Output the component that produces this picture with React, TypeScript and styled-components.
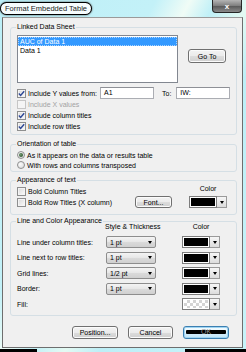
import React from "react";
import styled, { createGlobalStyle } from "styled-components";

const Global = createGlobalStyle`
  html, body { margin: 0; padding: 0; }
  body { background: #bff0f7; font-family: "Liberation Sans", Arial, sans-serif; }
  * { box-sizing: border-box; }
`;

const Screen = styled.div`
  width: 246px;
  height: 352px;
  overflow: hidden;
  display: flex;
  flex-direction: column;
  background: linear-gradient(118deg, #bdeff7 0%, #c3f1f8 36%, #f0fcf6 44%, #c0f0f7 50%, #e4faf3 58%, #bdeff7 66%, #c8f3f9 100%);
  font-family: "Liberation Sans", Arial, sans-serif;
  font-size: 7px;
  color: #000;
`;

const TitleBar = styled.div`
  height: 17px;
  flex: none;
  display: flex;
  justify-content: space-between;
  align-items: flex-start;
`;

const TitleText = styled.div`
  margin: 3px 0 0 1px;
  height: 11px;
  padding: 0 4px;
  line-height: 11px;
  font-size: 7.5px;
  color: #1c1c1c;
  background: #f6fcfd;
  border-radius: 6px;
  box-shadow: 0 0 0 1px #000, 0 0 2px 1px #333;
  white-space: nowrap;
`;

const CloseButton = styled.div`
  width: 30px;
  height: 13px;
  margin-right: 4px;
  border: 1px solid #262626;
  border-top: none;
  border-radius: 0 0 4px 4px;
  background: linear-gradient(#b4b4b4, #7c7c7c 50%, #5a5a5a 52%, #8a8a8a);
  color: #fff;
  font-size: 8px;
  font-weight: bold;
  display: flex;
  align-items: center;
  justify-content: center;
`;

const Dialog = styled.div`
  margin-left: 2px;
  width: 241px;
  height: 331px;
  flex: none;
  border: 1px solid #6e6e6e;
  border-top-color: #9a9a9a;
  background: #f0f0f0;
  padding: 5px 5px 0 7px;
  display: flex;
  flex-direction: column;
`;

const Group = styled.fieldset<{ $mt: number; $pt: number; $pb: number }>`
  margin: ${p => p.$mt}px 0 0 0;
  padding: ${p => p.$pt}px 0 ${p => p.$pb}px 6px;
  width: 227px;
  min-inline-size: 0;
  border: 1px solid #d5dfe5;
  border-radius: 3px;
`;

const Legend = styled.legend`
  padding: 0 1px;
  margin-left: -1px;
  font-size: 7px;
  line-height: 8px;
  white-space: nowrap;
`;

const ListRow = styled.div`
  display: flex;
  align-items: flex-start;
`;

const ListBox = styled.div`
  width: 161px;
  height: 48px;
  border: 1px solid #828790;
  background: #fff;
  padding-top: 1px;
`;

const ListItem = styled.div<{ $selected?: boolean }>`
  height: 9px;
  line-height: 9px;
  padding-left: 2px;
  color: ${p => (p.$selected ? "#fff" : "#000")};
  background: ${p => (p.$selected ? "#3399ff" : "transparent")};
  outline: ${p => (p.$selected ? "1px dotted #a8d3ff" : "none")};
  outline-offset: -1px;
`;

const PushButton = styled.div<{ $w: number; $ml?: number; $mt?: number; $h?: number }>`
  width: ${p => p.$w}px;
  height: ${p => p.$h ?? 13}px;
  margin-left: ${p => p.$ml ?? 0}px;
  margin-top: ${p => p.$mt ?? 0}px;
  border: 1px solid #707070;
  border-radius: 3px;
  background: linear-gradient(#f3f3f3 0%, #ebebeb 50%, #dddddd 50%, #cfcfcf 100%);
  box-shadow: inset 0 0 0 1px #fbfbfb;
  display: flex;
  align-items: center;
  justify-content: center;
  font-size: 7px;
  flex: none;
`;

const OkButton = styled(PushButton)`
  border-color: #3c7fb1;
  background: linear-gradient(#f4fbfe 0%, #e6f5fd 50%, #d3eefc 50%, #c3e5f7 100%);
  box-shadow: inset 0 0 0 1px #9fd5f3;
`;

const OkLabel = styled.span`
  width: 40px;
  height: 4px;
  margin-top: -1px;
  background: #000;
  border-radius: 1px;
  color: #9a9a9a;
  font-size: 7px;
  line-height: 4px;
  text-align: center;
  overflow: visible;
`;

const Rows = styled.div`
  margin-top: 4px;
  display: flex;
  flex-direction: column;
`;

const Row = styled.div<{ $h: number }>`
  display: flex;
  align-items: center;
  height: ${p => p.$h}px;
`;

const CheckItem = styled.div<{ $w?: number }>`
  display: flex;
  align-items: center;
  width: ${p => (p.$w ? `${p.$w}px` : "auto")};
  flex: none;
`;

const Box = styled.span<{ $disabled?: boolean }>`
  width: 9px;
  height: 9px;
  flex: none;
  border: 1px solid ${p => (p.$disabled ? "#c6c6c6" : "#8e8f8f")};
  background: ${p => (p.$disabled ? "#f5f5f5" : "linear-gradient(135deg, #d9d9d9, #fbfbfb)")};
  box-shadow: inset 0 0 0 1px ${p => (p.$disabled ? "#f5f5f5" : "#f4f4f4")};
  display: flex;
  align-items: center;
  justify-content: center;
`;

const RadioCircle = styled.span`
  width: 8px;
  height: 8px;
  flex: none;
  border: 1px solid #8e8f8f;
  border-radius: 50%;
  background: radial-gradient(circle at 35% 35%, #fbfbfb, #d6d6d6);
  display: flex;
  align-items: center;
  justify-content: center;
`;

const RadioDot = styled.span`
  width: 4px;
  height: 4px;
  border-radius: 50%;
  background: radial-gradient(circle at 40% 40%, #6f9a6f, #1d3f1d);
`;

const Label = styled.span<{ $disabled?: boolean }>`
  margin-left: 2px;
  font-size: 7px;
  white-space: nowrap;
  color: ${p => (p.$disabled ? "#a3a3a3" : "#000")};
`;

const TextField = styled.div<{ $w: number }>`
  width: ${p => p.$w}px;
  height: 12px;
  border: 1px solid #abadb3;
  border-top-color: #8e9096;
  background: #fff;
  padding-left: 3px;
  line-height: 10px;
  font-size: 7px;
  flex: none;
`;

const ToLabel = styled.span`
  margin: 0 5px 0 8px;
  font-size: 7px;
`;

const TextRow = styled.div`
  display: flex;
  align-items: flex-end;
  height: 23px;
`;

const TextChecks = styled.div`
  display: flex;
  flex-direction: column;
  width: 118px;
`;

const ColorColumn = styled.div`
  margin-left: 17px;
  display: flex;
  flex-direction: column;
  align-items: center;
  gap: 3px;
`;

const HeaderText = styled.span`
  font-size: 7px;
  line-height: 8px;
  white-space: nowrap;
`;

const LineGrid = styled.div`
  display: grid;
  grid-template-columns: 89px 76px 38px;
  grid-template-rows: 9.5px;
  grid-auto-rows: 12px;
  row-gap: 3.5px;
  align-items: center;
  margin-top: -2px;
`;

const GridHeader = styled.span<{ $center?: boolean }>`
  font-size: 7px;
  line-height: 7px;
  white-space: nowrap;
  justify-self: ${p => (p.$center ? "center" : "start")};
  margin-left: ${p => (p.$center ? 0 : -1)}px;
  align-self: start;
`;

const RowLabel = styled.span`
  font-size: 7px;
  white-space: nowrap;
`;

const Combo = styled.div`
  width: 50px;
  height: 12px;
  border: 1px solid #8d8d8d;
  border-radius: 2px;
  background: linear-gradient(#f4f4f4, #e6e6e6 50%, #dadada 52%, #d0d0d0);
  display: flex;
  align-items: center;
  justify-content: space-between;
  padding: 0 3px 0 3px;
  font-size: 7px;
`;

const Arrow = styled.span`
  width: 0;
  height: 0;
  border-left: 2.5px solid transparent;
  border-right: 2.5px solid transparent;
  border-top: 3px solid #000;
`;

const Swatch = styled.div`
  width: 38px;
  height: 12px;
  display: flex;
  flex: none;
`;

const SwatchColor = styled.div<{ $checker?: boolean }>`
  flex: 1;
  border: 1px solid #7d7d7d;
  box-shadow: inset 0 0 0 1px #fff;
  background-color: ${p => (p.$checker ? "#fff" : "#000")};
  background-image: ${p =>
    p.$checker ? "conic-gradient(#d4d4d4 25%, #fff 0 50%, #d4d4d4 0 75%, #fff 0)" : "none"};
  background-size: 6px 6px;
  background-position: 1px 1px;
`;

const SwatchButton = styled.div`
  width: 10px;
  border: 1px solid #9a9a9a;
  border-left: none;
  background: linear-gradient(#f6f6f6, #dcdcdc);
  display: flex;
  align-items: center;
  justify-content: center;
`;

const ButtonBar = styled.div`
  margin-top: 10px;
  display: flex;
  justify-content: flex-end;
  gap: 10px;
  padding-right: 8px;
`;

const BottomStrip = styled.div`
  height: 4px;
  margin-top: 1px;
  display: flex;
  justify-content: space-between;
  align-items: flex-end;
`;

const StripBlack = styled.div<{ $w: number }>`
  width: ${p => p.$w}px;
  height: 3px;
  background: #000;
`;

const CheckMark = () => (
  <svg width="7" height="7" viewBox="0 0 7 7">
    <polyline points="0.8,3.6 2.6,5.4 6.2,1.2" fill="none" stroke="#2d4796" strokeWidth="1.4" />
  </svg>
);

const Checkbox = ({ checked, disabled }: { checked?: boolean; disabled?: boolean }) => (
  <Box $disabled={disabled}>{checked ? <CheckMark /> : null}</Box>
);

const CheckLine = ({ label, checked, disabled, h = 11 }: { label: string; checked?: boolean; disabled?: boolean; h?: number }) => (
  <Row $h={h}>
    <CheckItem>
      <Checkbox checked={checked} disabled={disabled} />
      <Label $disabled={disabled}>{label}</Label>
    </CheckItem>
  </Row>
);

const Radio = ({ label, selected }: { label: string; selected?: boolean }) => (
  <Row $h={10}>
    <RadioCircle>{selected ? <RadioDot /> : null}</RadioCircle>
    <Label>{label}</Label>
  </Row>
);

const ColorPicker = ({ checker }: { checker?: boolean }) => (
  <Swatch>
    <SwatchColor $checker={checker} />
    <SwatchButton>
      <Arrow />
    </SwatchButton>
  </Swatch>
);

const lineRows = [
  { label: "Line under column titles:", value: "1 pt" },
  { label: "Line next to row titles:", value: "1 pt" },
  { label: "Grid lines:", value: "1/2 pt" },
  { label: "Border:", value: "1 pt" },
];

export default function App() {
  return (
    <Screen>
      <Global />
      <TitleBar>
        <TitleText>Format Embedded Table</TitleText>
        <CloseButton>x</CloseButton>
      </TitleBar>
      <Dialog>
        <Group $mt={0} $pt={4} $pb={2}>
          <Legend>Linked Data Sheet</Legend>
          <ListRow>
            <ListBox>
              <ListItem $selected>AUC of Data 1</ListItem>
              <ListItem>Data 1</ListItem>
            </ListBox>
            <PushButton $w={38} $h={14} $ml={10} $mt={14}>Go To</PushButton>
          </ListRow>
          <Rows>
            <Row $h={12}>
              <CheckItem $w={83}>
                <Checkbox checked />
                <Label>Include Y values from:</Label>
              </CheckItem>
              <TextField $w={54}>A1</TextField>
              <ToLabel>To:</ToLabel>
              <TextField $w={54}>IW:</TextField>
            </Row>
            <CheckLine label="Include X values" disabled />
            <CheckLine label="Include column titles" checked />
            <CheckLine label="Include row titles" checked />
          </Rows>
        </Group>

        <Group $mt={5} $pt={2} $pb={1}>
          <Legend>Orientation of table</Legend>
          <Radio label="As it appears on the data or results table" selected />
          <Radio label="With rows and columns transposed" />
        </Group>

        <Group $mt={4} $pt={1} $pb={6}>
          <Legend>Appearance of text</Legend>
          <TextRow>
            <TextChecks>
              <CheckLine label="Bold Column Titles" />
              <CheckLine label="Bold Row Titles (X column)" />
            </TextChecks>
            <PushButton $w={37} $h={12}>Font...</PushButton>
            <ColorColumn>
              <HeaderText>Color</HeaderText>
              <ColorPicker />
            </ColorColumn>
          </TextRow>
        </Group>

        <Group $mt={2} $pt={0} $pb={5}>
          <Legend>Line and Color Appearance</Legend>
          <LineGrid>
            <span />
            <GridHeader>Style &amp; Thickness</GridHeader>
            <GridHeader $center>Color</GridHeader>
            {lineRows.map(r => (
              <React.Fragment key={r.label}>
                <RowLabel>{r.label}</RowLabel>
                <Combo>
                  <span>{r.value}</span>
                  <Arrow />
                </Combo>
                <ColorPicker />
              </React.Fragment>
            ))}
            <RowLabel>Fill:</RowLabel>
            <span />
            <ColorPicker checker />
          </LineGrid>
        </Group>

        <ButtonBar>
          <PushButton $w={46}>Position...</PushButton>
          <PushButton $w={45}>Cancel</PushButton>
          <OkButton $w={46}>
            <OkLabel>OK</OkLabel>
          </OkButton>
        </ButtonBar>
      </Dialog>
      <BottomStrip>
        <StripBlack $w={37} />
        <StripBlack $w={61} />
      </BottomStrip>
    </Screen>
  );
}
